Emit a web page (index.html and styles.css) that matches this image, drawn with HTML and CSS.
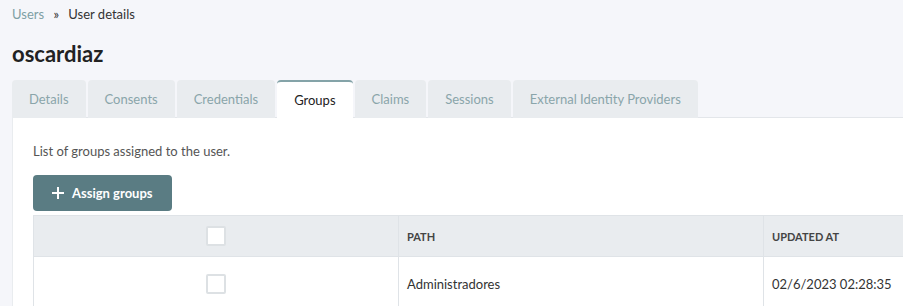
FILE: index.html
```html
<!DOCTYPE html>
<html>
<head>
  <title>User details</title>
  <link rel="stylesheet" href="styles.css">
</head>
<body>
  <div class="breadcrumb">
    <a href="#">Users</a>
    <span class="sep">&raquo;</span>
    <span>User details</span>
  </div>

  <h1 class="title">oscardiaz</h1>

  <div class="tabs">
    <div class="tab">Details</div>
    <div class="tab">Consents</div>
    <div class="tab">Credentials</div>
    <div class="tab active">Groups</div>
    <div class="tab">Claims</div>
    <div class="tab">Sessions</div>
    <div class="tab">External Identity Providers</div>
  </div>

  <div class="panel">
    <p class="hint">List of groups assigned to the user.</p>

    <button class="btn">
      <svg width="12" height="12" viewBox="0 0 12 12"><path d="M6 0v12M0 6h12" stroke="#fff" stroke-width="2"/></svg>
      Assign groups
    </button>

    <table class="grid">
      <thead>
        <tr>
          <th class="check"><span class="box"></span></th>
          <th>Path</th>
          <th>Updated at</th>
        </tr>
      </thead>
      <tbody>
        <tr>
          <td class="check"><span class="box"></span></td>
          <td>Administradores</td>
          <td>02/6/2023 02:28:35</td>
        </tr>
      </tbody>
    </table>
  </div>
</body>
</html>
```

FILE: styles.css
```css
body {
  margin: 0;
  padding: 5px 0 0 12px;
  background: #f5f6fa;
  font-family: Lato, "Open Sans", sans-serif;
  font-size: 13px;
  color: #333;
  overflow: hidden;
}

.breadcrumb {
  height: 18px;
  line-height: 18px;
}

.breadcrumb a {
  color: #7e9fa4;
  text-decoration: none;
}

.breadcrumb .sep {
  margin: 0 6px;
  color: #333;
}

.title {
  margin: 16px 0 0;
  font-size: 22px;
  font-weight: bold;
  color: #222;
  height: 30px;
  line-height: 30px;
}

.tabs {
  display: flex;
  gap: 2px;
  margin-top: 11px;
}

.tab {
  height: 38px;
  line-height: 38px;
  padding: 0 17px;
  background: #e9ecef;
  color: #8aa5aa;
  border-radius: 4px 4px 0 0;
  box-sizing: border-box;
}

.tab.active {
  background: #fff;
  color: #222;
  border-top: 2px solid #84a3a8;
  line-height: 36px;
}

.panel {
  background: #fff;
  border-top: 1px solid #e3e6ea;
  border-left: 1px solid #e9ecef;
  padding: 20px 0 0 20px;
  height: 168px;
  overflow: hidden;
  margin-top: -1px;
  margin-right: -20px;
}

.hint {
  margin: 4px 0 0;
  color: #555;
  line-height: 18px;
}

.btn {
  display: flex;
  align-items: center;
  gap: 8px;
  margin-top: 15px;
  height: 36px;
  padding: 0 19px 0 19px;
  background: #5a7c83;
  color: #fff;
  border: none;
  border-radius: 4px;
  font-family: inherit;
  font-size: 13px;
  font-weight: bold;
}

.grid {
  border-collapse: collapse;
  margin-top: 4px;
  width: 900px;
}

.grid th,
.grid td {
  border: 1px solid #dfe3e7;
  text-align: left;
  padding: 0 8px;
}

.grid th {
  background: #e9ecef;
  height: 40px;
  font-size: 11px;
  font-weight: bold;
  text-transform: uppercase;
  color: #444;
}

.grid td {
  height: 54px;
  color: #333;
}

.grid .check {
  width: 348px;
  text-align: center;
  vertical-align: middle;
}

.grid th:nth-child(2) {
  width: 348px;
}

.box {
  display: inline-block;
  width: 16px;
  height: 16px;
  border: 2px solid #dde1e4;
  border-radius: 2px;
  background: #fff;
  vertical-align: middle;
}
```
